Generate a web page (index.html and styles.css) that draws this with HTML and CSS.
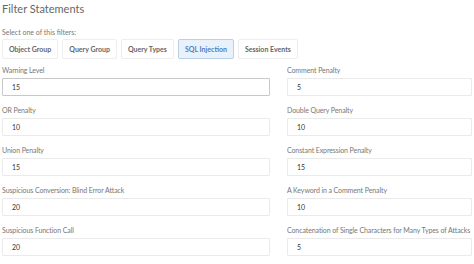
FILE: index.html
```html
<!DOCTYPE html>
<html lang="en">
<head>
    <meta charset="UTF-8">
    <title>Filter Statements</title>
    <link rel="stylesheet" href="styles.css">
</head>
<body>
    <h1 class="page-title">Filter Statements</h1>

    <p class="hint">Select one of this filters:</p>
    <div class="tabs">
        <div class="tab">Object Group</div>
        <div class="tab">Query Group</div>
        <div class="tab">Query Types</div>
        <div class="tab active">SQL Injection</div>
        <div class="tab">Session Events</div>
    </div>

    <div class="fields">
        <div class="field">
            <label>Warning Level</label>
            <input type="text" class="input-field focused" value="15">
        </div>
        <div class="field">
            <label>Comment Penalty</label>
            <input type="text" class="input-field" value="5">
        </div>
        <div class="field">
            <label>OR Penalty</label>
            <input type="text" class="input-field" value="10">
        </div>
        <div class="field">
            <label>Double Query Penalty</label>
            <input type="text" class="input-field" value="10">
        </div>
        <div class="field">
            <label>Union Penalty</label>
            <input type="text" class="input-field" value="15">
        </div>
        <div class="field">
            <label>Constant Expression Penalty</label>
            <input type="text" class="input-field" value="15">
        </div>
        <div class="field">
            <label>Suspicious Conversion: Blind Error Attack</label>
            <input type="text" class="input-field" value="20">
        </div>
        <div class="field">
            <label>A Keyword in a Comment Penalty</label>
            <input type="text" class="input-field" value="10">
        </div>
        <div class="field">
            <label>Suspicious Function Call</label>
            <input type="text" class="input-field" value="20">
        </div>
        <div class="field">
            <label>Concatenation of Single Characters for Many Types of Attacks</label>
            <input type="text" class="input-field" value="5">
        </div>
    </div>
</body>
</html>
```

FILE: styles.css
```css
/* Layout geral */
body {
    font-family: Lato, "Liberation Sans", sans-serif;
    background-color: #fff;
    color: #555;
    margin: 0;
    padding: 0 2px;
    overflow: hidden;
}

.page-title {
    font-size: 11px;
    font-weight: 400;
    color: #666;
    margin: 2px 0 0 0;
    line-height: 13px;
}

.hint {
    font-size: 7px;
    color: #777;
    margin: 13px 0 0 0;
    line-height: 9px;
}

/* Abas de filtro */
.tabs {
    display: flex;
    gap: 4px;
    margin-top: 2px;
}

.tab {
    height: 20px;
    padding: 0 6px;
    display: flex;
    align-items: center;
    font-size: 7px;
    font-weight: 700;
    color: #666;
    border: 1px solid #eee;
    border-radius: 2px;
    box-sizing: border-box;
    background-color: #fff;
}

.tab.active {
    background-color: #e9f1fb;
    border-color: #b9cfea;
    color: #4f7fc0;
}

/* Campos */
.fields {
    display: grid;
    grid-template-columns: 268px 185px;
    column-gap: 17px;
    row-gap: 9px;
    margin-top: 6px;
}

.field label {
    display: block;
    font-size: 7px;
    letter-spacing: -0.1px;
    color: #777;
    line-height: 10px;
    margin-bottom: 3px;
    white-space: nowrap;
}

.input-field {
    display: block;
    width: 100%;
    height: 18px;
    box-sizing: border-box;
    padding: 0 9px;
    border: 1px solid #eaeaea;
    border-radius: 1px;
    font-family: inherit;
    font-size: 7px;
    color: #333;
    background-color: #fff;
    outline: none;
}

.input-field.focused {
    border-color: #c8c8c8;
}
```
